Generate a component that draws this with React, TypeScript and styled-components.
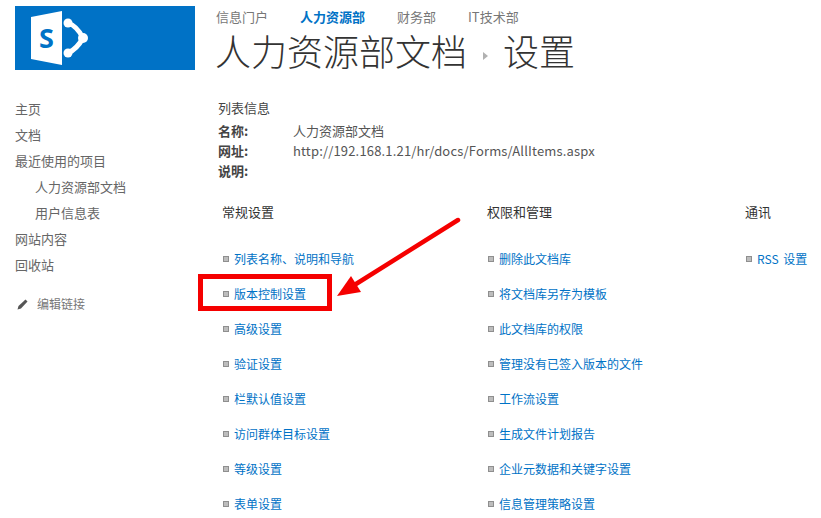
import styled, { createGlobalStyle } from 'styled-components';

const GlobalStyle = createGlobalStyle`
	html, body {
		margin: 0;
		height: 100%;
		overflow: hidden;
		background: #fff;
	}
	body {
		font-family: 'Noto Sans CJK SC', 'Liberation Sans', sans-serif;
		color: #444;
	}
`;

const Page = styled.div`
	position: relative;
	width: 821px;
	height: 518px;
	overflow: hidden;
	display: grid;
	grid-template-columns: 180px 1fr;
	column-gap: 21px;
	padding: 6px 0 0 15px;
	box-sizing: border-box;
`;

const LeftColumn = styled.div`
	display: flex;
	flex-direction: column;
`;

const LogoBox = styled.div`
	width: 180px;
	height: 64px;
	background: #0072c6;
	flex: none;
`;

const SideNav = styled.nav`
	display: flex;
	flex-direction: column;
	margin-top: 26px;
`;

const SideItem = styled.a<{ $nested?: boolean }>`
	font-size: 13px;
	line-height: 26px;
	height: 26px;
	color: #666;
	padding-left: ${(props) => (props.$nested ? '20px' : '0')};
`;

const EditLink = styled.a`
	display: flex;
	align-items: center;
	gap: 8px;
	margin-top: 13px;
	padding-left: 2px;
	font-size: 12px;
	line-height: 26px;
	color: #777;
`;

const Main = styled.main`
	display: flex;
	flex-direction: column;
	min-width: 0;
`;

const TopNav = styled.div`
	display: flex;
	gap: 32px;
	height: 20px;
	align-items: center;
	font-size: 13px;
`;

const TopLink = styled.a<{ $active?: boolean }>`
	color: ${(props) => (props.$active ? '#0072c6' : '#777')};
	font-weight: ${(props) => (props.$active ? 700 : 400)};
`;

const TitleRow = styled.div`
	display: flex;
	align-items: center;
	height: 48px;
	margin-left: -1px;
	font-size: 36px;
	font-weight: 300;
	color: #333;
	white-space: nowrap;
`;

const TitleArrow = styled.span`
	width: 0;
	height: 0;
	margin: 12px 15px 0 16px;
	border-left: 5px solid #b1b1b1;
	border-top: 4px solid transparent;
	border-bottom: 4px solid transparent;
`;

const InfoBlock = styled.section`
	margin: 24px 0 0 2px;
`;

const InfoTitle = styled.div`
	font-size: 13px;
	line-height: 20px;
	color: #444;
	margin-bottom: 3px;
`;

const InfoRow = styled.div`
	display: grid;
	grid-template-columns: 75px 1fr;
	font-size: 13px;
	line-height: 20px;
`;

const InfoLabel = styled.span`
	font-weight: 700;
	color: #444;
`;

const InfoValue = styled.span<{ $url?: boolean }>`
	color: #555;
	letter-spacing: ${(props) => (props.$url ? '0.17px' : '0')};
`;

const Columns = styled.div`
	display: grid;
	grid-template-columns: 265px 258px 1fr;
	margin: 18px 0 0 6px;
`;

const Column = styled.div`
	display: flex;
	flex-direction: column;
`;

const ColumnTitle = styled.h3`
	margin: 0 0 16px;
	font-size: 13px;
	line-height: 26px;
	font-weight: 400;
	color: #333;
`;

const LinkList = styled.ul`
	list-style: none;
	margin: 0;
	padding: 0;
`;

const LinkItem = styled.li`
	display: flex;
	align-items: center;
	height: 35px;
	font-size: 12px;
	word-spacing: 2px;
	color: #0072c6;
	white-space: nowrap;
`;

const Bullet = styled.span`
	width: 4px;
	height: 4px;
	margin: 0 5px 0 1px;
	border: 1px solid #8f8f8f;
	background: #bdbdbd;
	flex: none;
`;

const HighlightBox = styled.div`
	position: absolute;
	left: 198px;
	top: 274px;
	width: 134px;
	height: 37px;
	border: 5px solid #f50000;
	box-sizing: border-box;
`;

const ArrowOverlay = styled.svg`
	position: absolute;
	left: 330px;
	top: 212px;
`;

const general = [
	'列表名称、说明和导航',
	'版本控制设置',
	'高级设置',
	'验证设置',
	'栏默认值设置',
	'访问群体目标设置',
	'等级设置',
	'表单设置',
];

const permissions = [
	'删除此文档库',
	'将文档库另存为模板',
	'此文档库的权限',
	'管理没有已签入版本的文件',
	'工作流设置',
	'生成文件计划报告',
	'企业元数据和关键字设置',
	'信息管理策略设置',
];

const SettingsColumn = ({ title, items }: { title: string; items: string[] }) => (
	<Column>
		<ColumnTitle>{title}</ColumnTitle>
		<LinkList>
			{items.map((item) => (
				<LinkItem key={item}>
					<Bullet />
					{item}
				</LinkItem>
			))}
		</LinkList>
	</Column>
);

const App = () => {
	return (
		<Page>
			<GlobalStyle />
			<LeftColumn>
				<LogoBox>
					<svg width="180" height="64" viewBox="0 0 180 64">
						<path d="M16 11 L47 5 L47 59 L16 53 Z" fill="#fff" />
						<text x="24" y="42" fontFamily="'Open Sans', sans-serif" fontWeight="700" fontSize="27" fill="#0072c6">S</text>
						<path d="M53 17 Q62 20 68 32 Q62 43 53 47" stroke="#fff" strokeWidth="5" fill="none" />
						<circle cx="53" cy="17" r="4.5" fill="#fff" />
						<circle cx="68" cy="32" r="5" fill="#fff" />
						<circle cx="53" cy="47" r="4.5" fill="#fff" />
					</svg>
				</LogoBox>
				<SideNav>
					<SideItem>主页</SideItem>
					<SideItem>文档</SideItem>
					<SideItem>最近使用的项目</SideItem>
					<SideItem $nested>人力资源部文档</SideItem>
					<SideItem $nested>用户信息表</SideItem>
					<SideItem>网站内容</SideItem>
					<SideItem>回收站</SideItem>
					<EditLink>
						<svg width="12" height="12" viewBox="0 0 12 12">
							<path d="M0.5 11.5 L1.5 8 L8.5 1.5 L10.5 3.5 L4 10.5 Z" fill="#555" />
						</svg>
						编辑链接
					</EditLink>
				</SideNav>
			</LeftColumn>

			<Main>
				<TopNav>
					<TopLink>信息门户</TopLink>
					<TopLink $active>人力资源部</TopLink>
					<TopLink>财务部</TopLink>
					<TopLink>IT技术部</TopLink>
				</TopNav>
				<TitleRow>
					人力资源部文档
					<TitleArrow />
					设置
				</TitleRow>
				<InfoBlock>
					<InfoTitle>列表信息</InfoTitle>
					<InfoRow>
						<InfoLabel>名称:</InfoLabel>
						<InfoValue>人力资源部文档</InfoValue>
					</InfoRow>
					<InfoRow>
						<InfoLabel>网址:</InfoLabel>
						<InfoValue $url>http://192.168.1.21/hr/docs/Forms/AllItems.aspx</InfoValue>
					</InfoRow>
					<InfoRow>
						<InfoLabel>说明:</InfoLabel>
					</InfoRow>
				</InfoBlock>
				<Columns>
					<SettingsColumn title="常规设置" items={general} />
					<SettingsColumn title="权限和管理" items={permissions} />
					<SettingsColumn title="通讯" items={['RSS 设置']} />
				</Columns>
			</Main>

			<HighlightBox />
			<ArrowOverlay width="135" height="90" viewBox="0 0 135 90">
				<path d="M128 8 L26 72" stroke="#f50000" strokeWidth="4.5" strokeLinecap="round" fill="none" />
				<path d="M7 84 L21 64 L31 80 Z" fill="#f50000" />
			</ArrowOverlay>
		</Page>
	);
};

export default App;
